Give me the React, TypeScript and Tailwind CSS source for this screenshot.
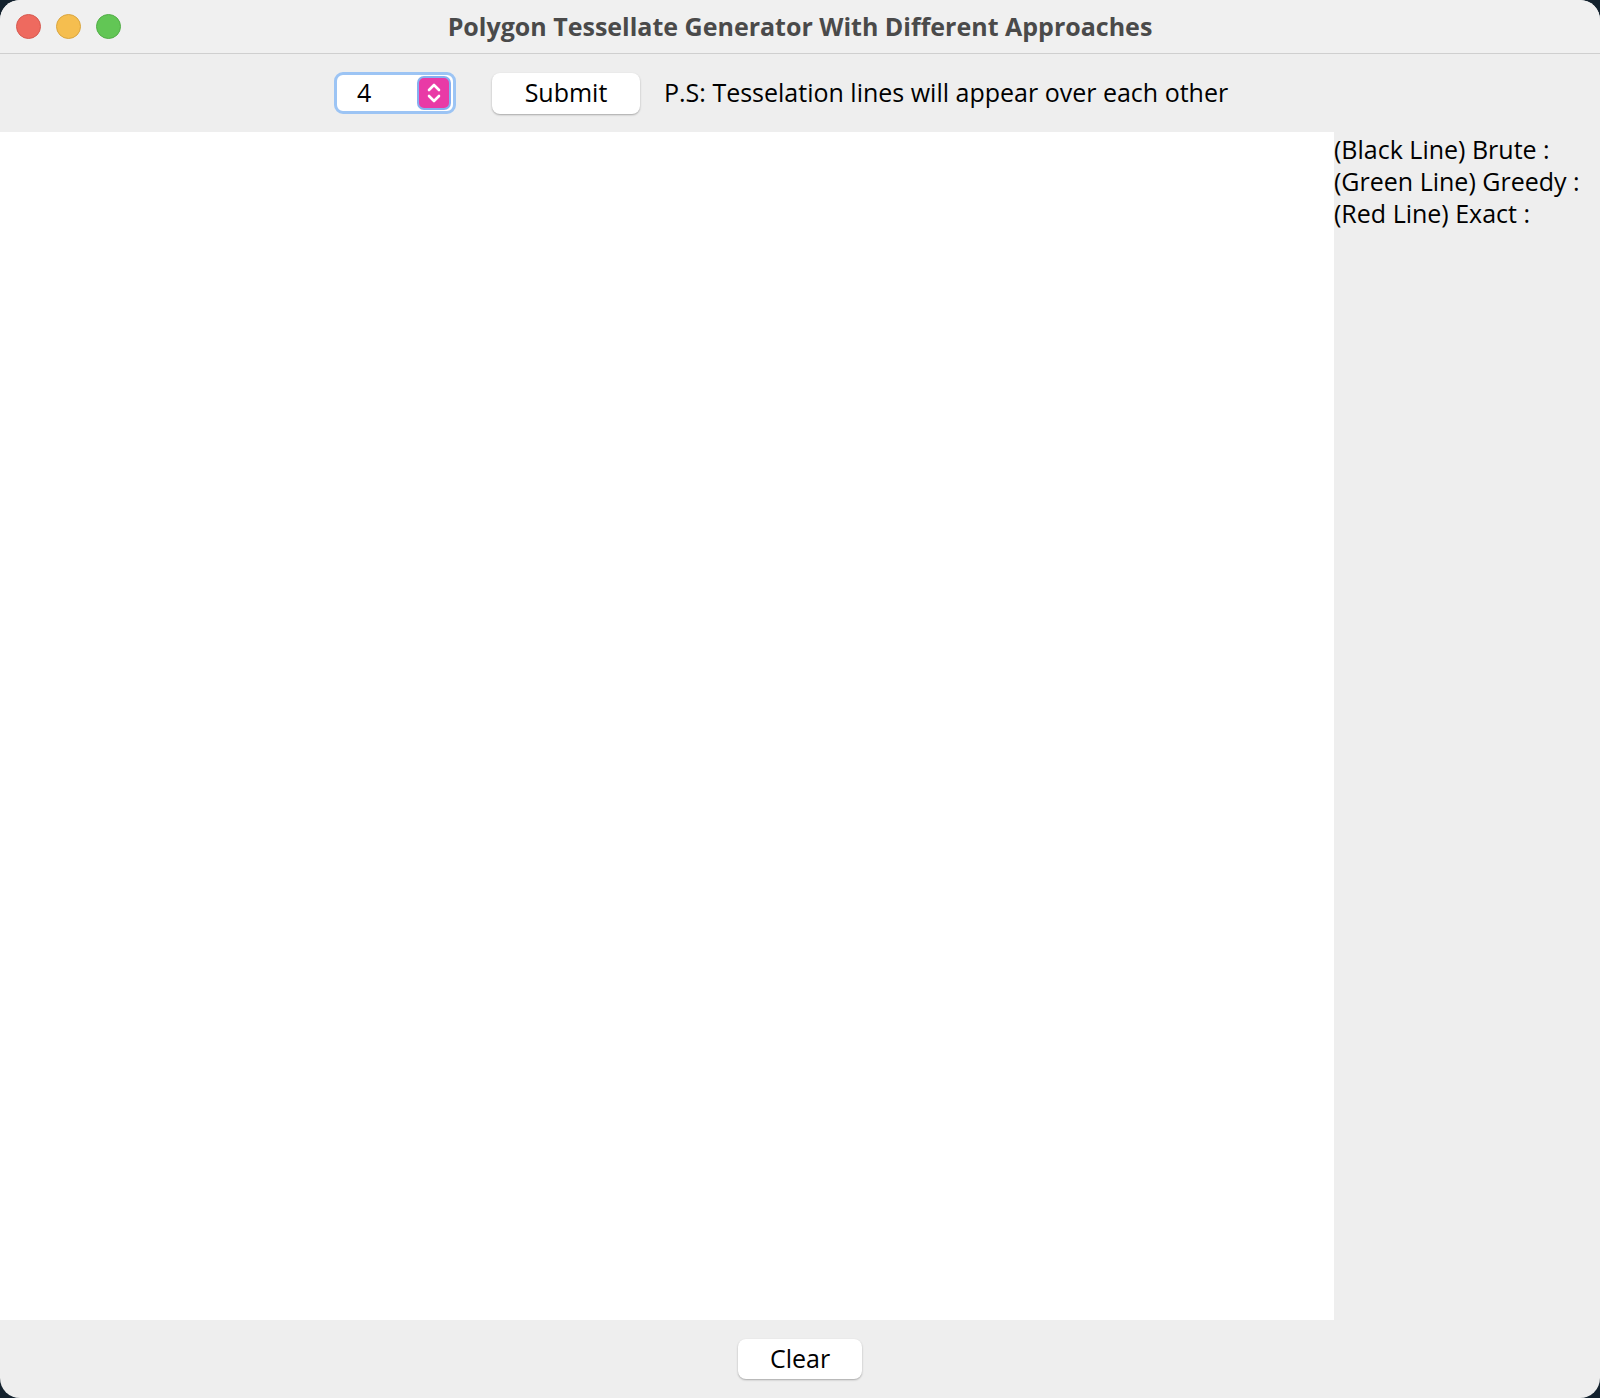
export default function App() {
  const font = { fontFamily: '"Open Sans", "DejaVu Sans", sans-serif' };
  return (
    <div className="w-[1600px] h-[1398px] bg-[#14222e]" style={font}>
      <div className="w-full h-full bg-[#eeeeee] rounded-[20px] overflow-hidden flex flex-col">
        <div className="h-[54px] shrink-0 relative flex items-center justify-center bg-[#f0f0f0] border-b border-[#cfcfcf]">
          <div className="absolute left-[16px] top-[14px] flex gap-[15px]">
            <div className="w-[25px] h-[25px] rounded-full bg-[#ee6a5f] border border-[#d65a50]" />
            <div className="w-[25px] h-[25px] rounded-full bg-[#f5be4f] border border-[#d9a53f]" />
            <div className="w-[25px] h-[25px] rounded-full bg-[#62c655] border border-[#52ad47]" />
          </div>
          <span className="text-[25px] font-bold text-[#4a4a4a]">Polygon Tessellate Generator With Different Approaches</span>
        </div>
        <div className="h-[78px] shrink-0 flex items-center pl-[334px]">
          <div className="w-[122px] h-[42px] rounded-[9px] border-[3px] border-[#9cc4f4] bg-white flex items-center justify-between pl-[20px] pr-[2px]">
            <span className="text-[25px] text-black">4</span>
            <div className="w-[34px] h-[34px] rounded-[7px] bg-[#e93aa6] border-2 border-[#86aff0] flex items-center justify-center">
              <svg width="16" height="24" viewBox="0 0 16 24" fill="none" stroke="white" strokeWidth="2.6" strokeLinecap="round" strokeLinejoin="round">
                <path d="M3 9l5-5 5 5" />
                <path d="M3 15l5 5 5-5" />
              </svg>
            </div>
          </div>
          <button className="ml-[36px] w-[148px] h-[41px] rounded-[8px] bg-white shadow-[0_1px_2px_rgba(0,0,0,0.3)] text-[25px] text-black">Submit</button>
          <span className="ml-[24px] text-[25px] text-black">P.S: Tesselation lines will appear over each other</span>
        </div>
        <div className="flex-1 flex min-h-0">
          <div className="w-[1334px] bg-white" />
          <div className="flex-1 pt-[1px] text-[25px] leading-[32px] text-black whitespace-nowrap overflow-hidden">
            <div>(Black Line) Brute :</div>
            <div>(Green Line) Greedy :</div>
            <div>(Red Line) Exact :</div>
          </div>
        </div>
        <div className="h-[78px] shrink-0 flex items-center justify-center">
          <button className="w-[124px] h-[40px] rounded-[8px] bg-white shadow-[0_1px_2px_rgba(0,0,0,0.3)] text-[25px] text-black">Clear</button>
        </div>
      </div>
    </div>
  );
}
